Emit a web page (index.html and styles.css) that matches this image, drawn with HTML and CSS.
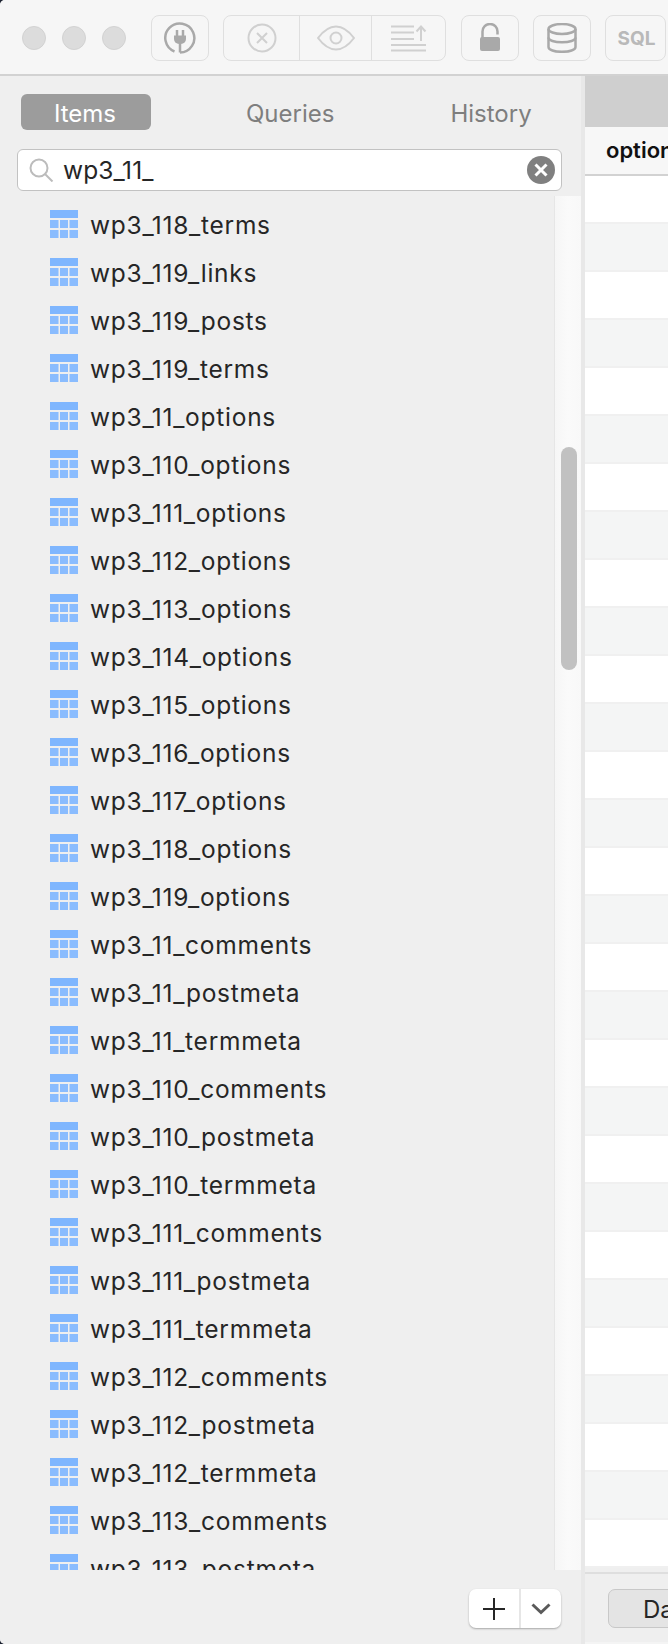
FILE: index.html
```html
<!DOCTYPE html>
<html lang="en">
<head>
  <meta charset="UTF-8">
  <title>Sequel Pro</title>
  <link rel="stylesheet" href="styles.css">
</head>
<body>
<div class="window">

  <div class="toolbar">
    <div class="lights">
      <span class="light"></span>
      <span class="light"></span>
      <span class="light"></span>
    </div>
    <div class="tool-btn plug-btn">
      <svg width="32" height="32" viewBox="0 0 32 32">
        <path d="M10.500 29.500A14.500 14.500 0 1 1 16 30.500" class="ic-line"/>
        <path d="M16 22v8.500" class="ic-line"/>
        <path d="M10 13.500h12v3.500a5 5 0 0 1-5 5h-2a5 5 0 0 1-5-5z" class="ic-fill"/>
        <path d="M13 8v6M19 8v6" class="ic-line"/>
      </svg>
    </div>
    <div class="tool-group">
      <div class="group-cell cell-x">
        <svg width="30" height="30" viewBox="0 0 30 30">
          <circle cx="15" cy="15" r="13.500" class="ic-line light-line"/>
          <path d="M10 10l10 10M20 10L10 20" class="ic-line light-line"/>
        </svg>
      </div>
      <div class="group-cell cell-eye">
        <svg width="38" height="26" viewBox="0 0 38 26">
          <path d="M1 13C7 5 12.500 1.500 19 1.500S31 5 37 13c-6 8-11.500 11.500-18 11.500S7 21 1 13z" class="ic-line light-line"/>
          <circle cx="19" cy="13" r="5.500" class="ic-line light-line"/>
        </svg>
      </div>
      <div class="group-cell cell-list">
        <svg width="36" height="27" viewBox="0 0 36 27">
          <path d="M0 1.500h23M0 7.500h23M0 14h23M0 20h35M0 25.500h35" class="ic-line light-line"/>
          <path d="M30 16V2M25.500 6.500L30 1.500l4.500 5" class="ic-line light-line"/>
        </svg>
      </div>
    </div>
    <div class="tool-btn lock-btn">
      <svg width="22" height="30" viewBox="0 0 22 30">
        <path d="M3.500 15V8.500a7.500 7.500 0 0 1 15 0V11.500" class="ic-line"/>
        <rect x="1" y="14" width="20" height="14" rx="2" class="ic-fill"/>
      </svg>
    </div>
    <div class="tool-btn db-btn">
      <svg width="30" height="30" viewBox="0 0 30 30">
        <ellipse cx="15" cy="6" rx="13.500" ry="5" class="ic-line"/>
        <path d="M1.500 6v18c0 2.800 6 4.800 13.500 4.800s13.500-2 13.500-4.800V6" class="ic-line"/>
        <path d="M1.500 14.500c0 2.800 6 4.800 13.500 4.800s13.500-2 13.500-4.800" class="ic-line"/>
      </svg>
    </div>
    <div class="tool-btn sql-btn">SQL</div>
  </div>

  <div class="main">
    <div class="sidebar">
      <div class="tabs">
        <span class="tab active">Items</span>
        <span class="tab">Queries</span>
        <span class="tab">History</span>
      </div>

      <div class="search">
        <svg class="search-icon" width="26" height="24" viewBox="0 0 26 24">
          <circle cx="10" cy="10" r="8.500" class="glass"/>
          <path d="M16 16l7.500 7.500" class="glass"/>
        </svg>
        <span class="search-text">wp3_11_</span>
        <span class="search-clear">
          <svg width="16" height="16" viewBox="0 0 16 16">
            <path d="M2.500 2.500l11 11M13.500 2.500l-11 11" class="clear-x"/>
          </svg>
        </span>
      </div>

      <div class="list-wrap">
        <ul class="table-list" id="tableList"></ul>
        <div class="scrollbar"><div class="thumb"></div></div>
      </div>

      <div class="side-foot">
        <div class="add-group">
          <span class="add-cell add-plus">
            <svg width="22" height="22" viewBox="0 0 22 22"><path d="M11 0v22M0 11h22" class="plus"/></svg>
          </span>
          <span class="add-cell add-more">
            <svg width="20" height="12" viewBox="0 0 20 12"><path d="M1.500 1.500L10 9.500l8.500-8" class="chev"/></svg>
          </span>
        </div>
      </div>
    </div>

    <div class="divider"></div>

    <div class="content">
      <div class="tabbar"></div>
      <div class="col-head"><span class="col-title">option_id</span></div>
      <div class="rows" id="rows"></div>
      <div class="content-foot"><span class="foot-btn">Data</span></div>
    </div>
  </div>

</div>

  <script>
    const names = [
      'wp3_118_terms', 'wp3_119_links', 'wp3_119_posts', 'wp3_119_terms',
      'wp3_11_options', 'wp3_110_options', 'wp3_111_options', 'wp3_112_options',
      'wp3_113_options', 'wp3_114_options', 'wp3_115_options', 'wp3_116_options',
      'wp3_117_options', 'wp3_118_options', 'wp3_119_options', 'wp3_11_comments',
      'wp3_11_postmeta', 'wp3_11_termmeta', 'wp3_110_comments', 'wp3_110_postmeta',
      'wp3_110_termmeta', 'wp3_111_comments', 'wp3_111_postmeta', 'wp3_111_termmeta',
      'wp3_112_comments', 'wp3_112_postmeta', 'wp3_112_termmeta', 'wp3_113_comments',
      'wp3_113_postmeta'
    ];

    const tableIcon = `
      <svg class="table-icon" width="28" height="28" viewBox="0 0 28 28">
        <rect width="28" height="8" fill="#7fb6fe"/>
        <rect y="10" width="8.500" height="8" fill="#8abcfe"/>
        <rect x="10" y="10" width="8" height="8" fill="#8abcfe"/>
        <rect x="19.500" y="10" width="8.500" height="8" fill="#8abcfe"/>
        <rect y="20" width="8.500" height="8" fill="#8abcfe"/>
        <rect x="10" y="20" width="8" height="8" fill="#8abcfe"/>
        <rect x="19.500" y="20" width="8.500" height="8" fill="#8abcfe"/>
      </svg>`;

    const list = document.getElementById('tableList');
    names.forEach(name => {
      const li = document.createElement('li');
      li.className = 'table-row';
      li.innerHTML = `${tableIcon}<span class="table-name">${name}</span>`;
      list.appendChild(li);
    });

    const rows = document.getElementById('rows');
    for (let i = 0; i < 29; i++) {
      const row = document.createElement('div');
      row.className = i % 2 ? 'row row-alt' : 'row';
      rows.appendChild(row);
    }
  </script>

</body>
</html>
```

FILE: styles.css
```css
* {
  box-sizing: border-box;
}
html, body {
  margin: 0;
  height: 100%;
}
body {
  width: 668px;
  height: 1644px;
  overflow: hidden;
  background: #1c2230;
  font-family: 'Inter', 'Liberation Sans', sans-serif;
  color: #262626;
}
svg {
  display: block;
  flex: none;
}
.window {
  height: 1644px;
  background: #efefef;
  border-radius: 5px 0 0 5px;
  overflow: hidden;
}

/* toolbar */
.toolbar {
  height: 76px;
  display: flex;
  align-items: flex-start;
  padding: 15px 0 0 22px;
  background: #f6f6f6;
  border-bottom: 2px solid #d2d2d2;
  overflow: hidden;
}
.lights {
  display: flex;
  gap: 16px;
  margin-top: 11px;
  margin-right: 25px;
}
.light {
  width: 24px;
  height: 24px;
  border-radius: 50%;
  background: #dcdcdc;
  border: 1px solid #d2d2d2;
}
.tool-btn, .tool-group {
  height: 46px;
  border: 1px solid #dfdfdf;
  border-radius: 8px;
  background: #f6f6f6;
  flex: none;
}
.tool-btn {
  width: 58px;
  display: flex;
  align-items: center;
  justify-content: center;
}
.tool-group {
  display: flex;
  margin-left: 14px;
  margin-right: 15px;
}
.group-cell {
  height: 100%;
  display: flex;
  align-items: center;
  justify-content: center;
  border-left: 1px solid #dfdfdf;
}
.group-cell:first-child {
  border-left: none;
}
.cell-x { width: 75px; }
.cell-eye { width: 72px; }
.cell-list { width: 74px; }
.lock-btn, .db-btn, .sql-btn {
  margin-right: 14px;
}
.sql-btn {
  width: 61px;
  font-size: 19px;
  font-weight: 700;
  color: #b9b9b9;
  padding-left: 2px;
}
.ic-line {
  fill: none;
  stroke: #a9a9a9;
  stroke-width: 2.500;
}
.ic-fill {
  fill: #a9a9a9;
}
.light-line {
  stroke: #d0d0d0;
  stroke-width: 2;
}

/* layout */
.main {
  display: flex;
  height: 1568px;
}
.sidebar {
  width: 581px;
  flex: none;
  display: flex;
  flex-direction: column;
  background: #efefef;
}
.divider {
  width: 4px;
  flex: none;
  background: #e8e8e8;
}
.content {
  flex: 1;
  min-width: 0;
  display: flex;
  flex-direction: column;
  overflow: hidden;
}

/* tabs */
.tabs {
  display: flex;
  padding: 18px 0 0 21px;
  height: 73px;
  flex: none;
}
.tab {
  font-size: 24px;
  color: #7e7e7e;
  height: 36px;
  line-height: 39px;
  text-align: center;
}
.tab:nth-child(2) {
  margin-left: 95px;
}
.tab:nth-child(3) {
  margin-left: 116px;
}
.tab.active {
  width: 130px;
  padding-right: 2px;
  background: #9c9c9c;
  color: #fff;
  border-radius: 6px;
}

/* search */
.search {
  margin-left: 17px;
  width: 545px;
  height: 42px;
  background: #fff;
  border: 1px solid #c2c2c2;
  border-radius: 6px;
  display: flex;
  align-items: center;
  padding-left: 11px;
  flex: none;
}
.search-icon {
  margin-right: 8px;
}
.glass {
  fill: none;
  stroke: #bcbcbc;
  stroke-width: 2;
}
.search-text {
  font-size: 24.500px;
  letter-spacing: 0.1px;
  flex: 1;
}
.search-clear {
  width: 28px;
  height: 28px;
  border-radius: 50%;
  background: #808080;
  margin-right: 6px;
  display: flex;
  align-items: center;
  justify-content: center;
}
.clear-x {
  stroke: #fff;
  stroke-width: 3;
  fill: none;
}

/* table list */
.list-wrap {
  height: 1374px;
  display: flex;
  flex: none;
  margin-top: 5px;
  overflow: hidden;
}
.table-list {
  list-style: none;
  margin: 0;
  padding: 4px 0 0 50px;
  flex: 1;
  min-width: 0;
}
.table-row {
  height: 48px;
  display: flex;
  align-items: center;
}
.table-icon {
  margin-right: 12px;
}
.table-name {
  font-size: 24.500px;
  letter-spacing: 0.75px;
  padding-top: 1px;
}
.scrollbar {
  width: 27px;
  flex: none;
  background: linear-gradient(to right, #f6f6f6, #fafafa 50%, #f8f8f8);
  border-left: 1px solid #e6e6e6;
  padding: 251px 4px 0 6px;
}
.thumb {
  height: 223px;
  background: #c1c1c1;
  border-radius: 8px;
}

/* sidebar footer */
.side-foot {
  flex: 1;
  display: flex;
  justify-content: flex-end;
  padding: 19px 20px 0 0;
}
.add-group {
  width: 92px;
  height: 39px;
  display: flex;
  background: #fff;
  border-radius: 7px;
  box-shadow: 0 1px 2px rgba(0,0,0,0.3);
}
.add-cell {
  display: flex;
  align-items: center;
  justify-content: center;
}
.add-plus {
  width: 52px;
  border-right: 2px solid #e6e6e6;
}
.add-more {
  flex: 1;
}
.plus {
  stroke: #262626;
  stroke-width: 2;
  fill: none;
}
.chev {
  stroke: #5a5a5a;
  stroke-width: 3;
  fill: none;
}

/* content */
.tabbar {
  height: 51px;
  background: #cfcfcf;
  flex: none;
}
.col-head {
  height: 49px;
  background: #f7f7f7;
  border-bottom: 2px solid #d2d2d2;
  padding: 0 0 2px 21px;
  display: flex;
  align-items: center;
  flex: none;
  white-space: nowrap;
}
.col-title {
  font-size: 22px;
  font-weight: 600;
  color: #111;
}
.rows {
  height: 1396px;
  flex: none;
  overflow: hidden;
}
.row {
  height: 48px;
  background: #fff;
  border-bottom: 2px solid #f0f0f0;
}
.row-alt {
  background: #f4f5f5;
}
.content-foot {
  flex: 1;
  border-top: 2px solid #dedede;
  border-bottom: 2px solid #f4f4f4;
  padding: 15px 0 0 23px;
  white-space: nowrap;
}
.foot-btn {
  display: inline-block;
  width: 120px;
  height: 39px;
  line-height: 39px;
  background: #e4e4e4;
  border: 1px solid #c8c8c8;
  border-radius: 7px;
  font-size: 24px;
  padding-left: 34px;
}
```
